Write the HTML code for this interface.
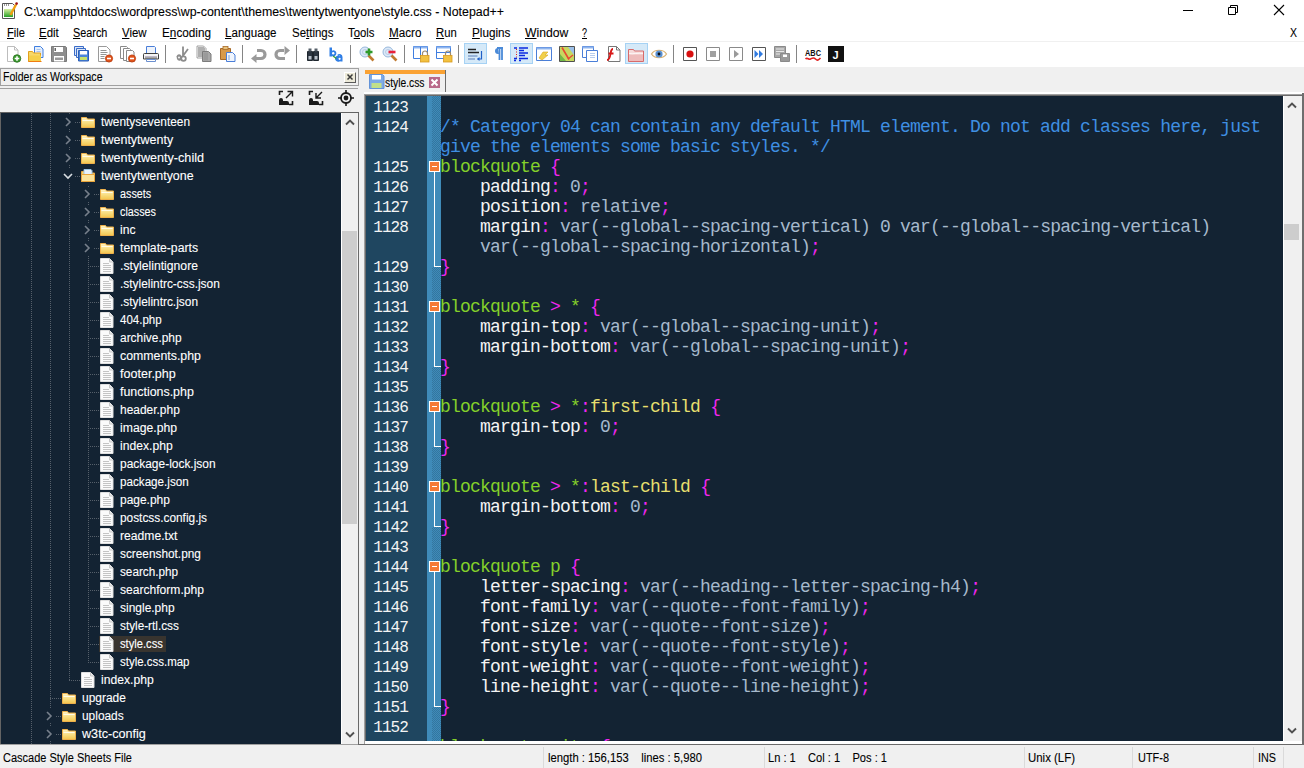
<!DOCTYPE html><html><head><meta charset="utf-8"><style>
*{margin:0;padding:0;box-sizing:border-box}
html,body{width:1304px;height:768px;overflow:hidden;background:#f0f0f0;font-family:"Liberation Sans",sans-serif;font-size:12px;color:#000}
.a{position:absolute}
.tx{position:absolute;white-space:nowrap;line-height:normal;transform-origin:0 0;-webkit-text-stroke:0.1px currentColor}
u{text-decoration:underline;text-underline-offset:1px}
svg{position:absolute;overflow:visible}
#title{left:0;top:0;width:1304px;height:22px;background:#fff}
#menu{left:0;top:22px;width:1304px;height:20px;background:#fff;border-bottom:1px solid #f0f0f0}
#tb{left:0;top:42px;width:1304px;height:26px;background:#fff;border-bottom:1px solid #d5d5d5}
#ed{left:366px;top:96px;width:917px;height:645px;background:#132333;overflow:hidden}
#ln{left:0;top:2px;width:61px;height:646px;color:#f4f4f4;font-family:"Liberation Mono",monospace;font-size:16px;letter-spacing:-0.9px;line-height:20px;text-align:right;padding-right:19px;white-space:pre}
#lnbg{left:0;top:0;width:61px;height:646px;background:#1f4660}
#fm{left:61px;top:0;width:14px;height:646px;background:#3f8bb9}
.chk{background-color:#3f8bb9;background-image:linear-gradient(45deg,#33769f 25%,transparent 25%,transparent 75%,#33769f 75%),linear-gradient(45deg,#33769f 25%,transparent 25%,transparent 75%,#33769f 75%);background-size:2px 2px;background-position:0 0,1px 1px}
#code{left:74px;top:1px;width:900px;color:#fff;font-family:"Liberation Mono",monospace;font-size:18px;letter-spacing:-0.8px;line-height:20px;white-space:pre}
#code div, #ln div{height:20px}
.c{color:#3f8fe2}.s{color:#84d02a}.p{color:#f026f0}.k{color:#f4f4f4}.v{color:#a6b9cc}.y{color:#e6df6e}
#tree{left:1px;top:112px;width:340px;height:632px;background:#132333;overflow:hidden}
.tr{color:#fff}
.sep{position:absolute;top:45px;width:1px;height:18px;background:#858585}
.act{position:absolute;top:43px;height:21px;background:#d5e9f8;border:1px solid #a6d2f4}
</style></head><body>
<div id="title" class="a"></div>
<span id="t0" class="tx" style="left:23.5px;top:4.74px;font-size:12px;color:#000;transform:scaleX(1.0310);">C:\xampp\htdocs\wordpress\wp-content\themes\twentytwentyone\style.css - Notepad++</span>
<svg style="left:0;top:0" width="22" height="22" viewBox="0 0 22 22"><defs><linearGradient id="tig" x1="0" y1="0" x2="0" y2="1"><stop offset="0" stop-color="#d8f0a0"/><stop offset="1" stop-color="#28a028"/></linearGradient></defs><path d="M2.5 3.5h10l2 2v13h-12z" fill="#fff" stroke="#555" stroke-width="1"/><path d="M4 5h1M6 5h1M8 5h1" stroke="#333"/><rect x="4" y="9" width="9" height="8" fill="url(#tig)"/><path d="M16 4.5L10.5 15" stroke="#f0a010" stroke-width="2.4"/><circle cx="16.6" cy="3.6" r="1.3" fill="#a01010"/></svg>
<svg style="left:1183px;top:5px" width="12" height="12"><path d="M0 5.5H10" stroke="#000" stroke-width="1"/></svg>
<svg style="left:1228px;top:5px" width="12" height="12"><path d="M0.5 2.5h7v7h-7z M2.5 2.5v-2h7v7h-2" fill="none" stroke="#000" stroke-width="1"/></svg>
<svg style="left:1274px;top:5px" width="12" height="12"><path d="M0 0L10 10M10 0L0 10" stroke="#000" stroke-width="1.1"/></svg>
<div id="menu" class="a"></div>
<span id="t1" class="tx" style="left:7.4px;top:26.04px;font-size:12px;color:#000;transform:scaleX(0.9298);"><u>F</u>ile</span>
<span id="t2" class="tx" style="left:39.3px;top:26.04px;font-size:12px;color:#000;transform:scaleX(0.9515);"><u>E</u>dit</span>
<span id="t3" class="tx" style="left:73px;top:26.04px;font-size:12px;color:#000;transform:scaleX(0.9041);"><u>S</u>earch</span>
<span id="t4" class="tx" style="left:122px;top:26.04px;font-size:12px;color:#000;transform:scaleX(0.9530);"><u>V</u>iew</span>
<span id="t5" class="tx" style="left:161.5px;top:26.04px;font-size:12px;color:#000;transform:scaleX(0.9785);">E<u>n</u>coding</span>
<span id="t6" class="tx" style="left:225px;top:26.04px;font-size:12px;color:#000;transform:scaleX(0.9643);"><u>L</u>anguage</span>
<span id="t7" class="tx" style="left:291.5px;top:26.04px;font-size:12px;color:#000;transform:scaleX(0.9564);">Se<u>t</u>tings</span>
<span id="t8" class="tx" style="left:347.5px;top:26.04px;font-size:12px;color:#000;transform:scaleX(0.9454);">T<u>o</u>ols</span>
<span id="t9" class="tx" style="left:388.6px;top:26.04px;font-size:12px;color:#000;transform:scaleX(0.9717);"><u>M</u>acro</span>
<span id="t10" class="tx" style="left:436px;top:26.04px;font-size:12px;color:#000;transform:scaleX(0.9396);"><u>R</u>un</span>
<span id="t11" class="tx" style="left:471.6px;top:26.04px;font-size:12px;color:#000;transform:scaleX(0.9752);"><u>P</u>lugins</span>
<span id="t12" class="tx" style="left:524.7px;top:26.04px;font-size:12px;color:#000;transform:scaleX(1.0143);"><u>W</u>indow</span>
<span id="t13" class="tx" style="left:582px;top:26.04px;font-size:12px;color:#000;transform:scaleX(0.7477);"><u>?</u></span>
<span id="t14" class="tx" style="left:1290px;top:26.14px;font-size:12px;color:#000;transform:scaleX(0.8733);">X</span>
<div id="tb" class="a"></div>
<div class="sep" style="left:165px"></div>
<div class="sep" style="left:242px"></div>
<div class="sep" style="left:296px"></div>
<div class="sep" style="left:350px"></div>
<div class="sep" style="left:404px"></div>
<div class="sep" style="left:458px"></div>
<div class="sep" style="left:673px"></div>
<div class="sep" style="left:796px"></div>
<div class="act" style="left:464px;width:23px"></div>
<div class="act" style="left:510px;width:23px"></div>
<div class="act" style="left:625px;width:23px"></div>
<svg style="left:0;top:0" width="1304" height="70" viewBox="0 0 1304 70"><g transform="translate(5,46)"><path d="M2.5 0.5h7l3.5 3.5v11.5h-10.5z" fill="#fff" stroke="#bdbdbd"/><path d="M9.5 0.5v3.5h3.5" fill="none" stroke="#bdbdbd"/>
<circle cx="12" cy="12.5" r="3.8" fill="#3b9a2e" stroke="#2a7020" stroke-width="0.8"/><path d="M12 10.2v4.6M9.7 12.5h4.6" stroke="#fff" stroke-width="1.6"/></g><g transform="translate(28,46)"><path d="M6.5 0.5h6l2.5 2.5v8.5h-8.5z" fill="#e4eefb" stroke="#3f7ee0"/><path d="M8.5 3.5h4M8.5 5.5h4" stroke="#a9c3ea"/>
<path d="M0.5 5.5h4l1 1.5h7v8.5h-12z" fill="#f7d868" stroke="#e2a11d"/><path d="M1 9.5h12v6h-12z" fill="#f5cf4a"/><path d="M0.5 15.5h13" stroke="#f07c10"/></g><g transform="translate(51,46)"><path d="M0.5 0.5h14l1 1v14h-15z" fill="#8e8e8e" stroke="#7a7a7a"/><rect x="3" y="1" width="9" height="5" fill="#fff"/><rect x="3.5" y="2" width="1.5" height="3" fill="#666"/><rect x="3" y="10" width="10" height="5.5" fill="#fff"/><rect x="4" y="11.5" width="8" height="2.5" fill="#999"/></g><g transform="translate(74,46)"><path d="M0.5 0.5h9v9h-9z" fill="#dbe6f7" stroke="#3a6cc8"/><path d="M2.5 2.5h9v9h-9z" fill="#dbe6f7" stroke="#3a6cc8"/>
<path d="M4.5 4.5h10v10.5h-10z" fill="#4d86d9" stroke="#2c5fb8"/><rect x="6" y="5" width="7" height="3.5" fill="#fff"/><rect x="6" y="11" width="7" height="3" fill="#c8e26a"/></g><g transform="translate(97,46)"><path d="M1.5 0.5h8l3.5 3.5v11.5h-11.5z" fill="#fff" stroke="#9a9a9a"/><path d="M3.5 4.5h6M3.5 6.5h7M3.5 8.5h6M3.5 10.5h4M3.5 12.5h4" stroke="#777" stroke-width="0.8"/>
<circle cx="12" cy="12.5" r="3.6" fill="#e1531a" stroke="#b63a0c" stroke-width="0.8"/><path d="M10 12.5h4" stroke="#fff" stroke-width="1.6"/></g><g transform="translate(120,46)"><path d="M0.5 0.5h6l1 1v11h-7z" fill="#fff" stroke="#8a8a8a"/><path d="M3.5 2.5h6l1 1v11h-7z" fill="#fff" stroke="#8a8a8a"/><path d="M6.5 4.5h6l1.5 1.5v9.5h-7.5z" fill="#fff" stroke="#8a8a8a"/>
<circle cx="12" cy="12.5" r="3.6" fill="#e1531a" stroke="#b63a0c" stroke-width="0.8"/><path d="M10 12.5h4" stroke="#fff" stroke-width="1.6"/></g><g transform="translate(143,46)"><path d="M3.5 0.5h8l1 1v6h-9z" fill="#eef3fb" stroke="#4a7ed8"/><path d="M1.5 7.5h13a1 1 0 0 1 1 1v4.5h-15v-4.5a1 1 0 0 1 1-1z" fill="#f4f4f4" stroke="#404040"/><path d="M2 10.5h12" stroke="#c0b8c8"/><path d="M2 12h12" stroke="#5a5a5a"/><path d="M3.5 13.5h9v2h-9z" fill="#fff" stroke="#6b8fcf"/></g><g transform="translate(174,46)"><path d="M9 0.5V10M14 3L8.5 10.5" stroke="#8c8c8c" stroke-width="1.8" fill="none"/><circle cx="9.5" cy="12.6" r="2.3" fill="none" stroke="#8c8c8c" stroke-width="1.8"/><path d="M2.5 10.5a2.6 2.6 0 0 1 5-0.5l0.5 2.5a2.6 2.6 0 0 1-5 0.5z" fill="#8c8c8c"/><circle cx="5" cy="11.5" r="0.9" fill="#fff"/></g><g transform="translate(197,46)"><path d="M0.5 0.5h6l2 2v9h-8z" fill="#b0b0b0" stroke="#fff"/><path d="M0 0h6.5l2.5 2.5v9.5h-9z" fill="none" stroke="#8a8a8a" stroke-width="0.8"/><path d="M5.5 5.5h6l2.5 2.5v7.5h-8.5z" fill="#a8a8a8" stroke="#7c7c7c"/><path d="M6.5 6.5h4.5v8h-4.5z" fill="#9a9a9a"/></g><g transform="translate(220,46)"><path d="M0.5 2.5h10v11h-10z" fill="#d89a4a" stroke="#a86a28"/><rect x="3" y="0.5" width="5" height="3" fill="#e8c27a" stroke="#a86a28" stroke-width="0.8"/>
<path d="M6.5 6.5h6l2.5 2.5v6.5h-8.5z" fill="#f0f5fd" stroke="#4a7ed8"/><path d="M9 9v5" stroke="#b8cdee" stroke-width="2"/></g><g transform="translate(251,46)"><path d="M6 4.5h4a4 4 0 0 1 0 8h-5" fill="none" stroke="#9a9a9a" stroke-width="3.2"/><path d="M0 12.5l5.5-4.5v9z" fill="#9a9a9a"/></g><g transform="translate(274,46)"><path d="M10 4.5h-4a4 4 0 0 0 0 8h5" fill="none" stroke="#9a9a9a" stroke-width="3.2"/><path d="M16 4.5l-5.5-4.5v9z" fill="#9a9a9a"/></g><g transform="translate(305,46)"><path d="M2.5 5.5h5v9h-5z" fill="#2b3540" stroke="#1e262e"/><path d="M8.5 5.5h5v9h-5z" fill="#2b3540" stroke="#1e262e"/><path d="M3.5 2.5h3v3h-3zM9.5 2.5h3v3h-3z" fill="#56606a"/><rect x="3.5" y="10" width="3" height="3.5" fill="#b8c0c8"/><rect x="9.5" y="10" width="3" height="3.5" fill="#b8c0c8"/></g><g transform="translate(328,46)"><path d="M1.5 1.5h2.5v3.2a3 3 0 1 1 0 5.3v0.5h-2.5z" fill="#2f7ee6"/><circle cx="5.2" cy="7.3" r="1.2" fill="#fff"/><path d="M9.5 8.5a3.2 3.2 0 0 1 5 2.5v4.5h-2.3v-0.6a3 3 0 1 1 0-4.4a1.2 1.2 0 0 0-2.2-0.4z" fill="#2f7ee6"/><circle cx="11.6" cy="12.8" r="1.1" fill="#fff"/><path d="M5 10l3.5 2.5" stroke="#3aa040" stroke-width="1.5"/></g><g transform="translate(359,46)"><circle cx="6" cy="6" r="5" fill="#dce9f8" stroke="#98b8dc"/><circle cx="6" cy="6" r="2.5" fill="none" stroke="#b9cde6"/><path d="M9.5 9.5l5 5" stroke="#c07a30" stroke-width="2.6"/><path d="M10 2.5v7M6.5 6h7" stroke="#2f9a2a" stroke-width="2.6"/></g><g transform="translate(382,46)"><circle cx="6" cy="6" r="5" fill="#dce9f8" stroke="#98b8dc"/><circle cx="6" cy="6" r="2.5" fill="none" stroke="#b9cde6"/><path d="M9.5 9.5l5 5" stroke="#c07a30" stroke-width="2.6"/><path d="M6.5 6h7" stroke="#e8203a" stroke-width="2.6"/></g><g transform="translate(413,46)"><path d="M0.5 0.5h14v12h-14z" fill="#fff" stroke="#3f7ee0"/><path d="M0.5 1.5h14" stroke="#8fb5ee" stroke-width="2"/><path d="M7.5 1v12" stroke="#3f7ee0"/>
<path d="M9.5 9.5v-2a2.5 2.5 0 0 1 5 0v2" fill="none" stroke="#9a8a70" stroke-width="1.2"/><rect x="7.5" y="9.5" width="8.5" height="6.5" fill="#f2c140" stroke="#d89a20" stroke-width="0.8"/></g><g transform="translate(436,46)"><path d="M0.5 0.5h14v12h-14z" fill="#fff" stroke="#3f7ee0"/><path d="M0.5 1.5h14" stroke="#8fb5ee" stroke-width="2"/><path d="M1 6.5h13" stroke="#3f7ee0"/>
<path d="M9.5 9.5v-2a2.5 2.5 0 0 1 5 0v2" fill="none" stroke="#9a8a70" stroke-width="1.2"/><rect x="7.5" y="9.5" width="8.5" height="6.5" fill="#f2c140" stroke="#d89a20" stroke-width="0.8"/></g><g transform="translate(467,46)"><path d="M1 3.5h8M1 6.5h11" stroke="#222" stroke-width="1.4"/><path d="M1 10h9.5M1 13h7" stroke="#5a7fb8" stroke-width="1.2"/><path d="M14.5 5v8h-4" fill="none" stroke="#1f5fc8" stroke-width="1.2"/><path d="M10 13l2.5-2v4z" fill="#1f5fc8"/></g><g transform="translate(490,46)"><path d="M7 2h6M9.5 2v12M12 2v12" stroke="#4a8ad8" stroke-width="1.8"/><path d="M8 2a3 3 0 0 0 0 6h1" fill="#4a8ad8"/></g><g transform="translate(513,46)"><path d="M3.5 3v9" stroke="#e02020" stroke-dasharray="1 1.5"/><path d="M1 2h3M1 12.5h3M1 14.5h2" stroke="#0a28e0" stroke-width="1.4"/><path d="M6 2h9M6 4.5h5M6 7h9M6 9.5h6M6 12.5h9M6 14.5h2" stroke="#0a28e0" stroke-width="1.6"/></g><g transform="translate(536,46)"><path d="M0.5 1.5h15v13h-15z" fill="#fff" stroke="#4a7ed8"/><path d="M0.5 2.5h15" stroke="#8fb5ee" stroke-width="2"/><path d="M3 12l4-6h5l-3 3h3l-6 5z" fill="#f2d04a" stroke="#d8a820" stroke-width="0.6"/></g><g transform="translate(559,46)"><path d="M0.5 0.5h15v15h-15z" fill="#c8d860" stroke="#505050"/><path d="M9 1h6v8z" fill="#9cc0e8"/><path d="M1 8l6 7h-6z" fill="#70b848"/><path d="M3 1.5l7 12" stroke="#e84830" stroke-width="1.6"/><path d="M9 13l5-4" stroke="#e84830" stroke-width="1.2"/></g><g transform="translate(582,46)"><path d="M0.5 0.5h11v11h-11z" fill="#fff" stroke="#4a7ed8"/><path d="M0.5 1.5h11" stroke="#8fb5ee" stroke-width="2"/><path d="M4.5 4.5h11v11h-11z" fill="#fff" stroke="#4a7ed8"/><path d="M8 7.5h5M8 9.5h5M8 11.5h5" stroke="#b8cdee"/></g><g transform="translate(605,46)"><path d="M3.5 0.5h8l3.5 3.5v11.5h-11.5z" fill="#fff" stroke="#777"/><path d="M11.5 0.5v3.5h3.5" fill="none" stroke="#777"/><path d="M8 3c-2 0-2 2-2.5 5s-1 6-3.5 6M3.5 7.5h5" fill="none" stroke="#d81818" stroke-width="1.8"/></g><g transform="translate(628,46)"><path d="M0.5 3.5h5l1 1.5h9v10.5h-15z" fill="#f6dada" stroke="#d86a6a"/><path d="M1 8.5h14v6.5h-14z" fill="#eebcbc"/><path d="M1 7.5c4 1 9-1 14 0" stroke="#fff" stroke-width="0.8" fill="none"/></g><g transform="translate(651,46)"><path d="M0.5 8c3-5 12-5 15 0c-3 5-12 5-15 0z" fill="#fff" stroke="#d8b070" stroke-width="1.2"/><circle cx="8" cy="8" r="3.6" fill="#5a90d0"/><circle cx="8" cy="8" r="1.4" fill="#111"/></g><g transform="translate(682,46)"><path d="M1.5 1.5h13v13h-13z" fill="#fff" stroke="#555"/><circle cx="8" cy="8" r="3.6" fill="#d81010"/></g><g transform="translate(705,46)"><path d="M1.5 1.5h13v13h-13z" fill="#fff" stroke="#8a8a8a"/><rect x="5" y="5" width="6" height="6" fill="#a0a0a0"/></g><g transform="translate(728,46)"><path d="M1.5 1.5h13v13h-13z" fill="#fff" stroke="#8a8a8a"/><path d="M6 4l5 4l-5 4z" fill="#9a9a9a"/></g><g transform="translate(751,46)"><path d="M1.5 1.5h13v13h-13z" fill="#fff" stroke="#555"/><path d="M3.5 4l4 4l-4 4zM8 4l4 4l-4 4z" fill="#2f7ae0"/></g><g transform="translate(774,46)"><path d="M0.5 0.5h11v11h-11z" fill="#a8a8a8" stroke="#8a8a8a"/><path d="M2 3h8M2 5.5h8M2 8h8" stroke="#e8e8e8"/><path d="M6.5 7.5h9v8h-9z" fill="#9a9a9a" stroke="#8a8a8a"/><rect x="9" y="8.5" width="4" height="2.5" fill="#fff"/></g><g transform="translate(805,46)"><text x="0" y="10" font-family="Liberation Sans" font-weight="bold" font-size="9" fill="#111" textLength="16" lengthAdjust="spacingAndGlyphs">ABC</text><path d="M0.5 13c2-2 3 1 5 0s3-2 5 0s3 1 5-1" fill="none" stroke="#e02020" stroke-width="1.6"/></g><g transform="translate(828,46)"><rect x="0" y="0" width="16" height="16" fill="#111"/><text x="4.5" y="12.5" font-family="Liberation Sans" font-weight="bold" font-size="11" fill="#fff">J</text></g></svg>
<div class="a" style="left:0;top:67px;width:359px;height:678px;background:#f0f0f0"></div>
<div class="a" style="left:0;top:68px;width:359px;height:18px;border:1px solid #a0a0a0;background:#f0f0f0"></div>
<div class="a" style="left:0;top:88px;width:358px;height:1px;background:#a0a0a0"></div>
<span id="t15" class="tx" style="left:2.5px;top:69.54px;font-size:12px;color:#000;transform:scaleX(0.8793);">Folder as Workspace</span>
<div class="a" style="left:344px;top:72px;width:12px;height:11px;background:#ece9d8;border-right:1px solid #5a5a5a;border-bottom:1px solid #5a5a5a;border-top:1px solid #fff;border-left:1px solid #fff"></div>
<svg style="left:347px;top:74px" width="7" height="7"><path d="M0.5 0.5L5.5 5.5M5.5 0.5L0.5 5.5" stroke="#3a3a3a" stroke-width="1.5"/></svg>
<svg style="left:278px;top:90px" width="16" height="16" viewBox="0 0 16 16"><path d="M5 1.5H1.5V5M14.5 11v3.5H11" fill="none" stroke="#1a1a1a" stroke-width="1.6"/><path d="M8 8L14 2M9.5 1.5h5v5" fill="none" stroke="#1a1a1a" stroke-width="1.4"/><path d="M1 10a2 2 0 0 1 4 0v1h4a2 2 0 0 1 2 2v2h-10z" fill="#1a1a1a"/></svg>
<svg style="left:308px;top:90px" width="16" height="16" viewBox="0 0 16 16"><path d="M5 1.5H1.5V5M14.5 11v3.5H11" fill="none" stroke="#1a1a1a" stroke-width="1.6"/><path d="M14 2L8 8M8 3v5h5" fill="none" stroke="#1a1a1a" stroke-width="1.4"/><path d="M1 10a2 2 0 0 1 4 0v1h4a2 2 0 0 1 2 2v2h-10z" fill="#1a1a1a"/></svg>
<svg style="left:338px;top:90px" width="16" height="16" viewBox="0 0 16 16"><circle cx="8" cy="8" r="5" fill="none" stroke="#1a1a1a" stroke-width="1.8"/><circle cx="8" cy="8" r="2.4" fill="#1a1a1a"/><path d="M8 0v3M8 13v3M0 8h3M13 8h3" stroke="#1a1a1a" stroke-width="1.6"/></svg>
<div id="tree" class="a"></div>
<div class="a" style="left:31px;top:112px;width:1px;height:632px;background:repeating-linear-gradient(#132333 0 1px,#56606b 1px 2px)"></div><div class="a" style="left:50px;top:112px;width:1px;height:632px;background:repeating-linear-gradient(#132333 0 1px,#56606b 1px 2px)"></div><div class="a" style="left:69px;top:112px;width:1px;height:569px;background:repeating-linear-gradient(#132333 0 1px,#56606b 1px 2px)"></div><div class="a" style="left:88px;top:185px;width:1px;height:477px;background:repeating-linear-gradient(#132333 0 1px,#56606b 1px 2px)"></div><div class="a" style="left:69px;top:122px;width:11px;height:1px;background:repeating-linear-gradient(90deg,#56606b 0 1px,#132333 1px 2px)"></div><div class="a" style="left:63px;top:115px;width:11px;height:14px;background:#132333"></div><svg style="left:65px;top:117px" width="7" height="10" viewBox="0 0 7 10"><path d="M1 1L5 5L1 9" fill="none" stroke="#77808c" stroke-width="1.6"/></svg><svg style="left:81px;top:117px" width="14" height="11" viewBox="0 0 14 11"><defs><linearGradient id="fg0" x1="0" y1="0" x2="0" y2="1"><stop offset="0" stop-color="#fff3c4"/><stop offset="0.5" stop-color="#f9df86"/><stop offset="1" stop-color="#f3c64e"/></linearGradient></defs><path d="M0.5 0.5h5l1 1.5h7v8.5h-13z" fill="url(#fg0)" stroke="#eeb04a" stroke-width="1"/><path d="M1.5 3.5h11" stroke="#fffbe8" stroke-width="1"/></svg><span id="t16" class="tx" style="left:101px;top:114.74px;font-size:12px;color:#fff;transform:scaleX(0.9882);">twentyseventeen</span><div class="a" style="left:69px;top:140px;width:11px;height:1px;background:repeating-linear-gradient(90deg,#56606b 0 1px,#132333 1px 2px)"></div><div class="a" style="left:63px;top:133px;width:11px;height:14px;background:#132333"></div><svg style="left:65px;top:135px" width="7" height="10" viewBox="0 0 7 10"><path d="M1 1L5 5L1 9" fill="none" stroke="#77808c" stroke-width="1.6"/></svg><svg style="left:81px;top:135px" width="14" height="11" viewBox="0 0 14 11"><defs><linearGradient id="fg1" x1="0" y1="0" x2="0" y2="1"><stop offset="0" stop-color="#fff3c4"/><stop offset="0.5" stop-color="#f9df86"/><stop offset="1" stop-color="#f3c64e"/></linearGradient></defs><path d="M0.5 0.5h5l1 1.5h7v8.5h-13z" fill="url(#fg1)" stroke="#eeb04a" stroke-width="1"/><path d="M1.5 3.5h11" stroke="#fffbe8" stroke-width="1"/></svg><span id="t17" class="tx" style="left:101px;top:132.74px;font-size:12px;color:#fff;transform:scaleX(1.0407);">twentytwenty</span><div class="a" style="left:69px;top:158px;width:11px;height:1px;background:repeating-linear-gradient(90deg,#56606b 0 1px,#132333 1px 2px)"></div><div class="a" style="left:63px;top:151px;width:11px;height:14px;background:#132333"></div><svg style="left:65px;top:153px" width="7" height="10" viewBox="0 0 7 10"><path d="M1 1L5 5L1 9" fill="none" stroke="#77808c" stroke-width="1.6"/></svg><svg style="left:81px;top:153px" width="14" height="11" viewBox="0 0 14 11"><defs><linearGradient id="fg2" x1="0" y1="0" x2="0" y2="1"><stop offset="0" stop-color="#fff3c4"/><stop offset="0.5" stop-color="#f9df86"/><stop offset="1" stop-color="#f3c64e"/></linearGradient></defs><path d="M0.5 0.5h5l1 1.5h7v8.5h-13z" fill="url(#fg2)" stroke="#eeb04a" stroke-width="1"/><path d="M1.5 3.5h11" stroke="#fffbe8" stroke-width="1"/></svg><span id="t18" class="tx" style="left:101px;top:150.74px;font-size:12px;color:#fff;transform:scaleX(1.0505);">twentytwenty-child</span><div class="a" style="left:69px;top:176px;width:11px;height:1px;background:repeating-linear-gradient(90deg,#56606b 0 1px,#132333 1px 2px)"></div><div class="a" style="left:63px;top:169px;width:12px;height:14px;background:#132333"></div><svg style="left:63px;top:173px" width="10" height="7" viewBox="0 0 10 7"><path d="M1 1L5 5L9 1" fill="none" stroke="#d8dde2" stroke-width="1.6"/></svg><svg style="left:81px;top:169px" width="14" height="13" viewBox="0 0 14 13"><path d="M0.5 2.5h5l1 1.5h7v8.5h-13z" fill="#f6d46a" stroke="#e9a53c" stroke-width="1"/><path d="M3 0.5h7l1 1v4h-8z" fill="#e8f2fb" stroke="#9cc3e6" stroke-width="1"/><path d="M0.5 5.5h13v7h-13z" fill="#fbe39a" stroke="#e9a53c" stroke-width="1"/></svg><span id="t19" class="tx" style="left:101px;top:168.74px;font-size:12px;color:#fff;transform:scaleX(1.0359);">twentytwentyone</span><div class="a" style="left:88px;top:194px;width:11px;height:1px;background:repeating-linear-gradient(90deg,#56606b 0 1px,#132333 1px 2px)"></div><div class="a" style="left:82px;top:187px;width:11px;height:14px;background:#132333"></div><svg style="left:84px;top:189px" width="7" height="10" viewBox="0 0 7 10"><path d="M1 1L5 5L1 9" fill="none" stroke="#77808c" stroke-width="1.6"/></svg><svg style="left:100px;top:189px" width="14" height="11" viewBox="0 0 14 11"><defs><linearGradient id="fg4" x1="0" y1="0" x2="0" y2="1"><stop offset="0" stop-color="#fff3c4"/><stop offset="0.5" stop-color="#f9df86"/><stop offset="1" stop-color="#f3c64e"/></linearGradient></defs><path d="M0.5 0.5h5l1 1.5h7v8.5h-13z" fill="url(#fg4)" stroke="#eeb04a" stroke-width="1"/><path d="M1.5 3.5h11" stroke="#fffbe8" stroke-width="1"/></svg><span id="t20" class="tx" style="left:120px;top:186.74px;font-size:12px;color:#fff;transform:scaleX(0.8995);">assets</span><div class="a" style="left:88px;top:212px;width:11px;height:1px;background:repeating-linear-gradient(90deg,#56606b 0 1px,#132333 1px 2px)"></div><div class="a" style="left:82px;top:205px;width:11px;height:14px;background:#132333"></div><svg style="left:84px;top:207px" width="7" height="10" viewBox="0 0 7 10"><path d="M1 1L5 5L1 9" fill="none" stroke="#77808c" stroke-width="1.6"/></svg><svg style="left:100px;top:207px" width="14" height="11" viewBox="0 0 14 11"><defs><linearGradient id="fg5" x1="0" y1="0" x2="0" y2="1"><stop offset="0" stop-color="#fff3c4"/><stop offset="0.5" stop-color="#f9df86"/><stop offset="1" stop-color="#f3c64e"/></linearGradient></defs><path d="M0.5 0.5h5l1 1.5h7v8.5h-13z" fill="url(#fg5)" stroke="#eeb04a" stroke-width="1"/><path d="M1.5 3.5h11" stroke="#fffbe8" stroke-width="1"/></svg><span id="t21" class="tx" style="left:120px;top:204.74px;font-size:12px;color:#fff;transform:scaleX(0.8971);">classes</span><div class="a" style="left:88px;top:230px;width:11px;height:1px;background:repeating-linear-gradient(90deg,#56606b 0 1px,#132333 1px 2px)"></div><div class="a" style="left:82px;top:223px;width:11px;height:14px;background:#132333"></div><svg style="left:84px;top:225px" width="7" height="10" viewBox="0 0 7 10"><path d="M1 1L5 5L1 9" fill="none" stroke="#77808c" stroke-width="1.6"/></svg><svg style="left:100px;top:225px" width="14" height="11" viewBox="0 0 14 11"><defs><linearGradient id="fg6" x1="0" y1="0" x2="0" y2="1"><stop offset="0" stop-color="#fff3c4"/><stop offset="0.5" stop-color="#f9df86"/><stop offset="1" stop-color="#f3c64e"/></linearGradient></defs><path d="M0.5 0.5h5l1 1.5h7v8.5h-13z" fill="url(#fg6)" stroke="#eeb04a" stroke-width="1"/><path d="M1.5 3.5h11" stroke="#fffbe8" stroke-width="1"/></svg><span id="t22" class="tx" style="left:120px;top:222.74px;font-size:12px;color:#fff;transform:scaleX(1.0102);">inc</span><div class="a" style="left:88px;top:248px;width:11px;height:1px;background:repeating-linear-gradient(90deg,#56606b 0 1px,#132333 1px 2px)"></div><div class="a" style="left:82px;top:241px;width:11px;height:14px;background:#132333"></div><svg style="left:84px;top:243px" width="7" height="10" viewBox="0 0 7 10"><path d="M1 1L5 5L1 9" fill="none" stroke="#77808c" stroke-width="1.6"/></svg><svg style="left:100px;top:243px" width="14" height="11" viewBox="0 0 14 11"><defs><linearGradient id="fg7" x1="0" y1="0" x2="0" y2="1"><stop offset="0" stop-color="#fff3c4"/><stop offset="0.5" stop-color="#f9df86"/><stop offset="1" stop-color="#f3c64e"/></linearGradient></defs><path d="M0.5 0.5h5l1 1.5h7v8.5h-13z" fill="url(#fg7)" stroke="#eeb04a" stroke-width="1"/><path d="M1.5 3.5h11" stroke="#fffbe8" stroke-width="1"/></svg><span id="t23" class="tx" style="left:120px;top:240.74px;font-size:12px;color:#fff;transform:scaleX(1.0169);">template-parts</span><div class="a" style="left:88px;top:266px;width:11px;height:1px;background:repeating-linear-gradient(90deg,#56606b 0 1px,#132333 1px 2px)"></div><svg style="left:100px;top:258px" width="14" height="16" viewBox="0 0 14 16"><path d="M0.5 0.5h9l3.5 3.5v11.5h-12.5z" fill="#fbfbfb" stroke="#e0e0e0" stroke-width="1"/><path d="M9.5 0.5v3.5h3.5" fill="#e8e8e8" stroke="#c8c8c8" stroke-width="1"/><path d="M3 5.5h6M3 7.5h8M3 9.5h8M3 11.5h8M3 13.5h8" stroke="#c4c4c4" stroke-width="1"/></svg><span id="t24" class="tx" style="left:120px;top:258.74px;font-size:12px;color:#fff;transform:scaleX(1.0167);">.stylelintignore</span><div class="a" style="left:88px;top:284px;width:11px;height:1px;background:repeating-linear-gradient(90deg,#56606b 0 1px,#132333 1px 2px)"></div><svg style="left:100px;top:276px" width="14" height="16" viewBox="0 0 14 16"><path d="M0.5 0.5h9l3.5 3.5v11.5h-12.5z" fill="#fbfbfb" stroke="#e0e0e0" stroke-width="1"/><path d="M9.5 0.5v3.5h3.5" fill="#e8e8e8" stroke="#c8c8c8" stroke-width="1"/><path d="M3 5.5h6M3 7.5h8M3 9.5h8M3 11.5h8M3 13.5h8" stroke="#c4c4c4" stroke-width="1"/></svg><span id="t25" class="tx" style="left:120px;top:276.74px;font-size:12px;color:#fff;transform:scaleX(0.9912);">.stylelintrc-css.json</span><div class="a" style="left:88px;top:302px;width:11px;height:1px;background:repeating-linear-gradient(90deg,#56606b 0 1px,#132333 1px 2px)"></div><svg style="left:100px;top:294px" width="14" height="16" viewBox="0 0 14 16"><path d="M0.5 0.5h9l3.5 3.5v11.5h-12.5z" fill="#fbfbfb" stroke="#e0e0e0" stroke-width="1"/><path d="M9.5 0.5v3.5h3.5" fill="#e8e8e8" stroke="#c8c8c8" stroke-width="1"/><path d="M3 5.5h6M3 7.5h8M3 9.5h8M3 11.5h8M3 13.5h8" stroke="#c4c4c4" stroke-width="1"/></svg><span id="t26" class="tx" style="left:120px;top:294.74px;font-size:12px;color:#fff;transform:scaleX(0.9911);">.stylelintrc.json</span><div class="a" style="left:88px;top:320px;width:11px;height:1px;background:repeating-linear-gradient(90deg,#56606b 0 1px,#132333 1px 2px)"></div><svg style="left:100px;top:312px" width="14" height="16" viewBox="0 0 14 16"><path d="M0.5 0.5h9l3.5 3.5v11.5h-12.5z" fill="#fbfbfb" stroke="#e0e0e0" stroke-width="1"/><path d="M9.5 0.5v3.5h3.5" fill="#e8e8e8" stroke="#c8c8c8" stroke-width="1"/><path d="M3 5.5h6M3 7.5h8M3 9.5h8M3 11.5h8M3 13.5h8" stroke="#c4c4c4" stroke-width="1"/></svg><span id="t27" class="tx" style="left:120px;top:312.74px;font-size:12px;color:#fff;transform:scaleX(0.9610);">404.php</span><div class="a" style="left:88px;top:338px;width:11px;height:1px;background:repeating-linear-gradient(90deg,#56606b 0 1px,#132333 1px 2px)"></div><svg style="left:100px;top:330px" width="14" height="16" viewBox="0 0 14 16"><path d="M0.5 0.5h9l3.5 3.5v11.5h-12.5z" fill="#fbfbfb" stroke="#e0e0e0" stroke-width="1"/><path d="M9.5 0.5v3.5h3.5" fill="#e8e8e8" stroke="#c8c8c8" stroke-width="1"/><path d="M3 5.5h6M3 7.5h8M3 9.5h8M3 11.5h8M3 13.5h8" stroke="#c4c4c4" stroke-width="1"/></svg><span id="t28" class="tx" style="left:120px;top:330.74px;font-size:12px;color:#fff;transform:scaleX(0.9928);">archive.php</span><div class="a" style="left:88px;top:356px;width:11px;height:1px;background:repeating-linear-gradient(90deg,#56606b 0 1px,#132333 1px 2px)"></div><svg style="left:100px;top:348px" width="14" height="16" viewBox="0 0 14 16"><path d="M0.5 0.5h9l3.5 3.5v11.5h-12.5z" fill="#fbfbfb" stroke="#e0e0e0" stroke-width="1"/><path d="M9.5 0.5v3.5h3.5" fill="#e8e8e8" stroke="#c8c8c8" stroke-width="1"/><path d="M3 5.5h6M3 7.5h8M3 9.5h8M3 11.5h8M3 13.5h8" stroke="#c4c4c4" stroke-width="1"/></svg><span id="t29" class="tx" style="left:120px;top:348.74px;font-size:12px;color:#fff;transform:scaleX(1.0279);">comments.php</span><div class="a" style="left:88px;top:374px;width:11px;height:1px;background:repeating-linear-gradient(90deg,#56606b 0 1px,#132333 1px 2px)"></div><svg style="left:100px;top:366px" width="14" height="16" viewBox="0 0 14 16"><path d="M0.5 0.5h9l3.5 3.5v11.5h-12.5z" fill="#fbfbfb" stroke="#e0e0e0" stroke-width="1"/><path d="M9.5 0.5v3.5h3.5" fill="#e8e8e8" stroke="#c8c8c8" stroke-width="1"/><path d="M3 5.5h6M3 7.5h8M3 9.5h8M3 11.5h8M3 13.5h8" stroke="#c4c4c4" stroke-width="1"/></svg><span id="t30" class="tx" style="left:120px;top:366.74px;font-size:12px;color:#fff;transform:scaleX(1.0451);">footer.php</span><div class="a" style="left:88px;top:392px;width:11px;height:1px;background:repeating-linear-gradient(90deg,#56606b 0 1px,#132333 1px 2px)"></div><svg style="left:100px;top:384px" width="14" height="16" viewBox="0 0 14 16"><path d="M0.5 0.5h9l3.5 3.5v11.5h-12.5z" fill="#fbfbfb" stroke="#e0e0e0" stroke-width="1"/><path d="M9.5 0.5v3.5h3.5" fill="#e8e8e8" stroke="#c8c8c8" stroke-width="1"/><path d="M3 5.5h6M3 7.5h8M3 9.5h8M3 11.5h8M3 13.5h8" stroke="#c4c4c4" stroke-width="1"/></svg><span id="t31" class="tx" style="left:120px;top:384.74px;font-size:12px;color:#fff;transform:scaleX(1.0337);">functions.php</span><div class="a" style="left:88px;top:410px;width:11px;height:1px;background:repeating-linear-gradient(90deg,#56606b 0 1px,#132333 1px 2px)"></div><svg style="left:100px;top:402px" width="14" height="16" viewBox="0 0 14 16"><path d="M0.5 0.5h9l3.5 3.5v11.5h-12.5z" fill="#fbfbfb" stroke="#e0e0e0" stroke-width="1"/><path d="M9.5 0.5v3.5h3.5" fill="#e8e8e8" stroke="#c8c8c8" stroke-width="1"/><path d="M3 5.5h6M3 7.5h8M3 9.5h8M3 11.5h8M3 13.5h8" stroke="#c4c4c4" stroke-width="1"/></svg><span id="t32" class="tx" style="left:120px;top:402.74px;font-size:12px;color:#fff;transform:scaleX(0.9956);">header.php</span><div class="a" style="left:88px;top:428px;width:11px;height:1px;background:repeating-linear-gradient(90deg,#56606b 0 1px,#132333 1px 2px)"></div><svg style="left:100px;top:420px" width="14" height="16" viewBox="0 0 14 16"><path d="M0.5 0.5h9l3.5 3.5v11.5h-12.5z" fill="#fbfbfb" stroke="#e0e0e0" stroke-width="1"/><path d="M9.5 0.5v3.5h3.5" fill="#e8e8e8" stroke="#c8c8c8" stroke-width="1"/><path d="M3 5.5h6M3 7.5h8M3 9.5h8M3 11.5h8M3 13.5h8" stroke="#c4c4c4" stroke-width="1"/></svg><span id="t33" class="tx" style="left:120px;top:420.74px;font-size:12px;color:#fff;transform:scaleX(1.0170);">image.php</span><div class="a" style="left:88px;top:446px;width:11px;height:1px;background:repeating-linear-gradient(90deg,#56606b 0 1px,#132333 1px 2px)"></div><svg style="left:100px;top:438px" width="14" height="16" viewBox="0 0 14 16"><path d="M0.5 0.5h9l3.5 3.5v11.5h-12.5z" fill="#fbfbfb" stroke="#e0e0e0" stroke-width="1"/><path d="M9.5 0.5v3.5h3.5" fill="#e8e8e8" stroke="#c8c8c8" stroke-width="1"/><path d="M3 5.5h6M3 7.5h8M3 9.5h8M3 11.5h8M3 13.5h8" stroke="#c4c4c4" stroke-width="1"/></svg><span id="t34" class="tx" style="left:120px;top:438.74px;font-size:12px;color:#fff;transform:scaleX(1.0125);">index.php</span><div class="a" style="left:88px;top:464px;width:11px;height:1px;background:repeating-linear-gradient(90deg,#56606b 0 1px,#132333 1px 2px)"></div><svg style="left:100px;top:456px" width="14" height="16" viewBox="0 0 14 16"><path d="M0.5 0.5h9l3.5 3.5v11.5h-12.5z" fill="#fbfbfb" stroke="#e0e0e0" stroke-width="1"/><path d="M9.5 0.5v3.5h3.5" fill="#e8e8e8" stroke="#c8c8c8" stroke-width="1"/><path d="M3 5.5h6M3 7.5h8M3 9.5h8M3 11.5h8M3 13.5h8" stroke="#c4c4c4" stroke-width="1"/></svg><span id="t35" class="tx" style="left:120px;top:456.74px;font-size:12px;color:#fff;transform:scaleX(0.9952);">package-lock.json</span><div class="a" style="left:88px;top:482px;width:11px;height:1px;background:repeating-linear-gradient(90deg,#56606b 0 1px,#132333 1px 2px)"></div><svg style="left:100px;top:474px" width="14" height="16" viewBox="0 0 14 16"><path d="M0.5 0.5h9l3.5 3.5v11.5h-12.5z" fill="#fbfbfb" stroke="#e0e0e0" stroke-width="1"/><path d="M9.5 0.5v3.5h3.5" fill="#e8e8e8" stroke="#c8c8c8" stroke-width="1"/><path d="M3 5.5h6M3 7.5h8M3 9.5h8M3 11.5h8M3 13.5h8" stroke="#c4c4c4" stroke-width="1"/></svg><span id="t36" class="tx" style="left:120px;top:474.74px;font-size:12px;color:#fff;transform:scaleX(0.9715);">package.json</span><div class="a" style="left:88px;top:500px;width:11px;height:1px;background:repeating-linear-gradient(90deg,#56606b 0 1px,#132333 1px 2px)"></div><svg style="left:100px;top:492px" width="14" height="16" viewBox="0 0 14 16"><path d="M0.5 0.5h9l3.5 3.5v11.5h-12.5z" fill="#fbfbfb" stroke="#e0e0e0" stroke-width="1"/><path d="M9.5 0.5v3.5h3.5" fill="#e8e8e8" stroke="#c8c8c8" stroke-width="1"/><path d="M3 5.5h6M3 7.5h8M3 9.5h8M3 11.5h8M3 13.5h8" stroke="#c4c4c4" stroke-width="1"/></svg><span id="t37" class="tx" style="left:120px;top:492.74px;font-size:12px;color:#fff;transform:scaleX(0.9968);">page.php</span><div class="a" style="left:88px;top:518px;width:11px;height:1px;background:repeating-linear-gradient(90deg,#56606b 0 1px,#132333 1px 2px)"></div><svg style="left:100px;top:510px" width="14" height="16" viewBox="0 0 14 16"><path d="M0.5 0.5h9l3.5 3.5v11.5h-12.5z" fill="#fbfbfb" stroke="#e0e0e0" stroke-width="1"/><path d="M9.5 0.5v3.5h3.5" fill="#e8e8e8" stroke="#c8c8c8" stroke-width="1"/><path d="M3 5.5h6M3 7.5h8M3 9.5h8M3 11.5h8M3 13.5h8" stroke="#c4c4c4" stroke-width="1"/></svg><span id="t38" class="tx" style="left:120px;top:510.74px;font-size:12px;color:#fff;transform:scaleX(0.9881);">postcss.config.js</span><div class="a" style="left:88px;top:536px;width:11px;height:1px;background:repeating-linear-gradient(90deg,#56606b 0 1px,#132333 1px 2px)"></div><svg style="left:100px;top:528px" width="14" height="16" viewBox="0 0 14 16"><path d="M0.5 0.5h9l3.5 3.5v11.5h-12.5z" fill="#fbfbfb" stroke="#e0e0e0" stroke-width="1"/><path d="M9.5 0.5v3.5h3.5" fill="#e8e8e8" stroke="#c8c8c8" stroke-width="1"/><path d="M3 5.5h6M3 7.5h8M3 9.5h8M3 11.5h8M3 13.5h8" stroke="#c4c4c4" stroke-width="1"/></svg><span id="t39" class="tx" style="left:120px;top:528.74px;font-size:12px;color:#fff;transform:scaleX(1.0123);">readme.txt</span><div class="a" style="left:88px;top:554px;width:11px;height:1px;background:repeating-linear-gradient(90deg,#56606b 0 1px,#132333 1px 2px)"></div><svg style="left:100px;top:546px" width="14" height="16" viewBox="0 0 14 16"><path d="M0.5 0.5h9l3.5 3.5v11.5h-12.5z" fill="#fbfbfb" stroke="#e0e0e0" stroke-width="1"/><path d="M9.5 0.5v3.5h3.5" fill="#e8e8e8" stroke="#c8c8c8" stroke-width="1"/><path d="M3 5.5h6M3 7.5h8M3 9.5h8M3 11.5h8M3 13.5h8" stroke="#c4c4c4" stroke-width="1"/></svg><span id="t40" class="tx" style="left:120px;top:546.74px;font-size:12px;color:#fff;transform:scaleX(0.9858);">screenshot.png</span><div class="a" style="left:88px;top:572px;width:11px;height:1px;background:repeating-linear-gradient(90deg,#56606b 0 1px,#132333 1px 2px)"></div><svg style="left:100px;top:564px" width="14" height="16" viewBox="0 0 14 16"><path d="M0.5 0.5h9l3.5 3.5v11.5h-12.5z" fill="#fbfbfb" stroke="#e0e0e0" stroke-width="1"/><path d="M9.5 0.5v3.5h3.5" fill="#e8e8e8" stroke="#c8c8c8" stroke-width="1"/><path d="M3 5.5h6M3 7.5h8M3 9.5h8M3 11.5h8M3 13.5h8" stroke="#c4c4c4" stroke-width="1"/></svg><span id="t41" class="tx" style="left:120px;top:564.74px;font-size:12px;color:#fff;transform:scaleX(0.9785);">search.php</span><div class="a" style="left:88px;top:590px;width:11px;height:1px;background:repeating-linear-gradient(90deg,#56606b 0 1px,#132333 1px 2px)"></div><svg style="left:100px;top:582px" width="14" height="16" viewBox="0 0 14 16"><path d="M0.5 0.5h9l3.5 3.5v11.5h-12.5z" fill="#fbfbfb" stroke="#e0e0e0" stroke-width="1"/><path d="M9.5 0.5v3.5h3.5" fill="#e8e8e8" stroke="#c8c8c8" stroke-width="1"/><path d="M3 5.5h6M3 7.5h8M3 9.5h8M3 11.5h8M3 13.5h8" stroke="#c4c4c4" stroke-width="1"/></svg><span id="t42" class="tx" style="left:120px;top:582.74px;font-size:12px;color:#fff;transform:scaleX(1.0063);">searchform.php</span><div class="a" style="left:88px;top:608px;width:11px;height:1px;background:repeating-linear-gradient(90deg,#56606b 0 1px,#132333 1px 2px)"></div><svg style="left:100px;top:600px" width="14" height="16" viewBox="0 0 14 16"><path d="M0.5 0.5h9l3.5 3.5v11.5h-12.5z" fill="#fbfbfb" stroke="#e0e0e0" stroke-width="1"/><path d="M9.5 0.5v3.5h3.5" fill="#e8e8e8" stroke="#c8c8c8" stroke-width="1"/><path d="M3 5.5h6M3 7.5h8M3 9.5h8M3 11.5h8M3 13.5h8" stroke="#c4c4c4" stroke-width="1"/></svg><span id="t43" class="tx" style="left:120px;top:600.74px;font-size:12px;color:#fff;transform:scaleX(0.9978);">single.php</span><div class="a" style="left:88px;top:626px;width:11px;height:1px;background:repeating-linear-gradient(90deg,#56606b 0 1px,#132333 1px 2px)"></div><svg style="left:100px;top:618px" width="14" height="16" viewBox="0 0 14 16"><path d="M0.5 0.5h9l3.5 3.5v11.5h-12.5z" fill="#fbfbfb" stroke="#e0e0e0" stroke-width="1"/><path d="M9.5 0.5v3.5h3.5" fill="#e8e8e8" stroke="#c8c8c8" stroke-width="1"/><path d="M3 5.5h6M3 7.5h8M3 9.5h8M3 11.5h8M3 13.5h8" stroke="#c4c4c4" stroke-width="1"/></svg><span id="t44" class="tx" style="left:120px;top:618.74px;font-size:12px;color:#fff;transform:scaleX(0.9800);">style-rtl.css</span><div class="a" style="left:88px;top:644px;width:11px;height:1px;background:repeating-linear-gradient(90deg,#56606b 0 1px,#132333 1px 2px)"></div><div class="a" style="left:99px;top:636px;width:67px;height:16px;background:#38342f"></div><svg style="left:100px;top:636px" width="14" height="16" viewBox="0 0 14 16"><path d="M0.5 0.5h9l3.5 3.5v11.5h-12.5z" fill="#fbfbfb" stroke="#e0e0e0" stroke-width="1"/><path d="M9.5 0.5v3.5h3.5" fill="#e8e8e8" stroke="#c8c8c8" stroke-width="1"/><path d="M3 5.5h6M3 7.5h8M3 9.5h8M3 11.5h8M3 13.5h8" stroke="#c4c4c4" stroke-width="1"/></svg><span id="t45" class="tx" style="left:120px;top:636.74px;font-size:12px;color:#fff;transform:scaleX(0.9323);">style.css</span><div class="a" style="left:88px;top:662px;width:11px;height:1px;background:repeating-linear-gradient(90deg,#56606b 0 1px,#132333 1px 2px)"></div><svg style="left:100px;top:654px" width="14" height="16" viewBox="0 0 14 16"><path d="M0.5 0.5h9l3.5 3.5v11.5h-12.5z" fill="#fbfbfb" stroke="#e0e0e0" stroke-width="1"/><path d="M9.5 0.5v3.5h3.5" fill="#e8e8e8" stroke="#c8c8c8" stroke-width="1"/><path d="M3 5.5h6M3 7.5h8M3 9.5h8M3 11.5h8M3 13.5h8" stroke="#c4c4c4" stroke-width="1"/></svg><span id="t46" class="tx" style="left:120px;top:654.74px;font-size:12px;color:#fff;transform:scaleX(0.9561);">style.css.map</span><div class="a" style="left:69px;top:680px;width:11px;height:1px;background:repeating-linear-gradient(90deg,#56606b 0 1px,#132333 1px 2px)"></div><svg style="left:81px;top:672px" width="14" height="16" viewBox="0 0 14 16"><path d="M0.5 0.5h9l3.5 3.5v11.5h-12.5z" fill="#fbfbfb" stroke="#e0e0e0" stroke-width="1"/><path d="M9.5 0.5v3.5h3.5" fill="#e8e8e8" stroke="#c8c8c8" stroke-width="1"/><path d="M3 5.5h6M3 7.5h8M3 9.5h8M3 11.5h8M3 13.5h8" stroke="#c4c4c4" stroke-width="1"/></svg><span id="t47" class="tx" style="left:101px;top:672.74px;font-size:12px;color:#fff;transform:scaleX(1.0125);">index.php</span><div class="a" style="left:50px;top:698px;width:11px;height:1px;background:repeating-linear-gradient(90deg,#56606b 0 1px,#132333 1px 2px)"></div><svg style="left:62px;top:693px" width="14" height="11" viewBox="0 0 14 11"><defs><linearGradient id="fg32" x1="0" y1="0" x2="0" y2="1"><stop offset="0" stop-color="#fff3c4"/><stop offset="0.5" stop-color="#f9df86"/><stop offset="1" stop-color="#f3c64e"/></linearGradient></defs><path d="M0.5 0.5h5l1 1.5h7v8.5h-13z" fill="url(#fg32)" stroke="#eeb04a" stroke-width="1"/><path d="M1.5 3.5h11" stroke="#fffbe8" stroke-width="1"/></svg><span id="t48" class="tx" style="left:82px;top:690.74px;font-size:12px;color:#fff;transform:scaleX(0.9967);">upgrade</span><div class="a" style="left:50px;top:716px;width:11px;height:1px;background:repeating-linear-gradient(90deg,#56606b 0 1px,#132333 1px 2px)"></div><div class="a" style="left:44px;top:709px;width:11px;height:14px;background:#132333"></div><svg style="left:46px;top:711px" width="7" height="10" viewBox="0 0 7 10"><path d="M1 1L5 5L1 9" fill="none" stroke="#77808c" stroke-width="1.6"/></svg><svg style="left:62px;top:711px" width="14" height="11" viewBox="0 0 14 11"><defs><linearGradient id="fg33" x1="0" y1="0" x2="0" y2="1"><stop offset="0" stop-color="#fff3c4"/><stop offset="0.5" stop-color="#f9df86"/><stop offset="1" stop-color="#f3c64e"/></linearGradient></defs><path d="M0.5 0.5h5l1 1.5h7v8.5h-13z" fill="url(#fg33)" stroke="#eeb04a" stroke-width="1"/><path d="M1.5 3.5h11" stroke="#fffbe8" stroke-width="1"/></svg><span id="t49" class="tx" style="left:82px;top:708.74px;font-size:12px;color:#fff;transform:scaleX(0.9918);">uploads</span><div class="a" style="left:50px;top:734px;width:11px;height:1px;background:repeating-linear-gradient(90deg,#56606b 0 1px,#132333 1px 2px)"></div><div class="a" style="left:44px;top:727px;width:11px;height:14px;background:#132333"></div><svg style="left:46px;top:729px" width="7" height="10" viewBox="0 0 7 10"><path d="M1 1L5 5L1 9" fill="none" stroke="#77808c" stroke-width="1.6"/></svg><svg style="left:62px;top:729px" width="14" height="11" viewBox="0 0 14 11"><defs><linearGradient id="fg34" x1="0" y1="0" x2="0" y2="1"><stop offset="0" stop-color="#fff3c4"/><stop offset="0.5" stop-color="#f9df86"/><stop offset="1" stop-color="#f3c64e"/></linearGradient></defs><path d="M0.5 0.5h5l1 1.5h7v8.5h-13z" fill="url(#fg34)" stroke="#eeb04a" stroke-width="1"/><path d="M1.5 3.5h11" stroke="#fffbe8" stroke-width="1"/></svg><span id="t50" class="tx" style="left:82px;top:726.74px;font-size:12px;color:#fff;transform:scaleX(1.0527);">w3tc-config</span>
<div class="a" style="left:0;top:112px;width:1px;height:632px;background:#646464"></div>
<div class="a" style="left:0;top:744px;width:359px;height:1px;background:#a0a0a0"></div>
<div class="a" style="left:341px;top:112px;width:17px;height:632px;background:#f0f0f0;border-left:1px solid #fff"></div>
<div class="a" style="left:342px;top:231px;width:15px;height:293px;background:#cdcdcd"></div>
<svg style="left:345px;top:119px" width="10" height="7" viewBox="0 0 10 7"><path d="M1 5.5L5 1.5L9 5.5" fill="none" stroke="#505050" stroke-width="1.9"/></svg>
<svg style="left:345px;top:731px" width="10" height="7" viewBox="0 0 10 7"><path d="M1 1.5L5 5.5L9 1.5" fill="none" stroke="#505050" stroke-width="1.9"/></svg>
<div class="a" style="left:358px;top:112px;width:1px;height:633px;background:#696969"></div>
<div class="a" style="left:0;top:112px;width:359px;height:1px;background:#646464"></div>
<div class="a" style="left:359px;top:67px;width:945px;height:28px;background:#f0f0f0"></div>
<div class="a" style="left:365px;top:70px;width:81px;height:25px;background:#f0f0f0;border-right:1px solid #6d6d6d"></div>
<div class="a" style="left:365px;top:70px;width:80px;height:4px;background:#faa233"></div>
<span id="t51" class="tx" style="left:384.5px;top:76.14px;font-size:12px;color:#000;transform:scaleX(0.8584);">style.css</span>
<svg style="left:369px;top:74px" width="16" height="15" viewBox="0 0 16 15"><path d="M0.5 0.5h13l1.5 1.5v12.5h-14.5z" fill="#7eaae6" stroke="#6393d8"/><rect x="3" y="1" width="9" height="4.5" fill="#fff"/><rect x="2.5" y="9" width="10" height="5" fill="#c2e08a"/></svg>
<div class="a" style="left:429px;top:77px;width:11px;height:11px;background:#b9698a"></div>
<svg style="left:430px;top:78px" width="9" height="9"><path d="M1.5 1.5L7.5 7.5M7.5 1.5L1.5 7.5" stroke="#fff" stroke-width="2"/></svg>
<div class="a" style="left:359px;top:93px;width:945px;height:652px;background:#f0f0f0"></div>
<div class="a" style="left:364px;top:92px;width:940px;height:2px;background:#fff"></div>
<div class="a" style="left:364px;top:94px;width:938px;height:1px;background:#a0a0a0"></div>
<div class="a" style="left:364px;top:94px;width:1px;height:650px;background:#a0a0a0"></div>
<div class="a" style="left:365px;top:95px;width:937px;height:1px;background:#696969"></div>
<div class="a" style="left:365px;top:95px;width:1px;height:647px;background:#696969"></div>
<div class="a" style="left:365px;top:741px;width:937px;height:3px;background:#fff"></div>
<div class="a" style="left:359px;top:744px;width:945px;height:1px;background:#696969"></div>
<div class="a" style="left:1302px;top:93px;width:2px;height:652px;background:#6e6e6e"></div>
<div class="a" style="left:1283px;top:96px;width:19px;height:645px;background:#f0f0f0;border-left:1px solid #fff"></div>
<div class="a" style="left:1284px;top:224px;width:15px;height:16px;background:#cdcdcd"></div>
<svg style="left:1287px;top:102px" width="10" height="7" viewBox="0 0 10 7"><path d="M1 5.5L5 1.5L9 5.5" fill="none" stroke="#505050" stroke-width="1.9"/></svg>
<svg style="left:1287px;top:727px" width="10" height="7" viewBox="0 0 10 7"><path d="M1 1.5L5 5.5L9 1.5" fill="none" stroke="#505050" stroke-width="1.9"/></svg>
<div id="ed" class="a"><div id="lnbg" class="a"></div><div id="ln" class="a"><div>1123</div><div>1124</div><div></div><div>1125</div><div>1126</div><div>1127</div><div>1128</div><div></div><div>1129</div><div>1130</div><div>1131</div><div>1132</div><div>1133</div><div>1134</div><div>1135</div><div>1136</div><div>1137</div><div>1138</div><div>1139</div><div>1140</div><div>1141</div><div>1142</div><div>1143</div><div>1144</div><div>1145</div><div>1146</div><div>1147</div><div>1148</div><div>1149</div><div>1150</div><div>1151</div><div>1152</div><div>1153</div></div><div id="fm" class="a"></div><div class="a chk" style="left:66px;top:0px;width:9px;height:65px"></div><div class="a chk" style="left:66px;top:171px;width:9px;height:34px"></div><div class="a chk" style="left:66px;top:271px;width:9px;height:34px"></div><div class="a chk" style="left:66px;top:351px;width:9px;height:34px"></div><div class="a chk" style="left:66px;top:431px;width:9px;height:34px"></div><div class="a chk" style="left:66px;top:611px;width:9px;height:35px"></div><div class="a" style="left:68px;top:76px;width:1px;height:94px;background:#fff"></div><div class="a" style="left:68px;top:170px;width:7px;height:1px;background:#fff"></div><div class="a" style="left:63px;top:65px;width:11px;height:11px;background:#f47a35;border:1px solid #fff"></div><div class="a" style="left:66px;top:70px;width:5px;height:1px;background:#fff"></div><div class="a" style="left:68px;top:216px;width:1px;height:54px;background:#fff"></div><div class="a" style="left:68px;top:270px;width:7px;height:1px;background:#fff"></div><div class="a" style="left:63px;top:205px;width:11px;height:11px;background:#f47a35;border:1px solid #fff"></div><div class="a" style="left:66px;top:210px;width:5px;height:1px;background:#fff"></div><div class="a" style="left:68px;top:316px;width:1px;height:34px;background:#fff"></div><div class="a" style="left:68px;top:350px;width:7px;height:1px;background:#fff"></div><div class="a" style="left:63px;top:305px;width:11px;height:11px;background:#f47a35;border:1px solid #fff"></div><div class="a" style="left:66px;top:310px;width:5px;height:1px;background:#fff"></div><div class="a" style="left:68px;top:396px;width:1px;height:34px;background:#fff"></div><div class="a" style="left:68px;top:430px;width:7px;height:1px;background:#fff"></div><div class="a" style="left:63px;top:385px;width:11px;height:11px;background:#f47a35;border:1px solid #fff"></div><div class="a" style="left:66px;top:390px;width:5px;height:1px;background:#fff"></div><div class="a" style="left:68px;top:476px;width:1px;height:134px;background:#fff"></div><div class="a" style="left:68px;top:610px;width:7px;height:1px;background:#fff"></div><div class="a" style="left:63px;top:465px;width:11px;height:11px;background:#f47a35;border:1px solid #fff"></div><div class="a" style="left:66px;top:470px;width:5px;height:1px;background:#fff"></div><div id="code" class="a"><div></div><div><span class="c">/* Category 04 can contain any default HTML element. Do not add classes here, just</span></div><div><span class="c">give the elements some basic styles. */</span></div><div><span class="s">blockquote</span> <span class="p">{</span></div><div>    <span class="k">padding</span><span class="p">:</span><span class="v"> 0</span><span class="p">;</span></div><div>    <span class="k">position</span><span class="p">:</span><span class="v"> relative</span><span class="p">;</span></div><div>    <span class="k">margin</span><span class="p">:</span><span class="v"> var(--global--spacing-vertical) 0 var(--global--spacing-vertical)</span></div><div><span class="v">    var(--global--spacing-horizontal)</span><span class="p">;</span></div><div><span class="p">}</span></div><div></div><div><span class="s">blockquote </span><span class="p">&gt;</span><span class="s"> * </span><span class="p">{</span></div><div>    <span class="k">margin-top</span><span class="p">:</span><span class="v"> var(--global--spacing-unit)</span><span class="p">;</span></div><div>    <span class="k">margin-bottom</span><span class="p">:</span><span class="v"> var(--global--spacing-unit)</span><span class="p">;</span></div><div><span class="p">}</span></div><div></div><div><span class="s">blockquote </span><span class="p">&gt;</span><span class="s"> *</span><span class="p">:</span><span class="y">first-child</span> <span class="p">{</span></div><div>    <span class="k">margin-top</span><span class="p">:</span><span class="v"> 0</span><span class="p">;</span></div><div><span class="p">}</span></div><div></div><div><span class="s">blockquote </span><span class="p">&gt;</span><span class="s"> *</span><span class="p">:</span><span class="y">last-child</span> <span class="p">{</span></div><div>    <span class="k">margin-bottom</span><span class="p">:</span><span class="v"> 0</span><span class="p">;</span></div><div><span class="p">}</span></div><div></div><div><span class="s">blockquote p </span><span class="p">{</span></div><div>    <span class="k">letter-spacing</span><span class="p">:</span><span class="v"> var(--heading--letter-spacing-h4)</span><span class="p">;</span></div><div>    <span class="k">font-family</span><span class="p">:</span><span class="v"> var(--quote--font-family)</span><span class="p">;</span></div><div>    <span class="k">font-size</span><span class="p">:</span><span class="v"> var(--quote--font-size)</span><span class="p">;</span></div><div>    <span class="k">font-style</span><span class="p">:</span><span class="v"> var(--quote--font-style)</span><span class="p">;</span></div><div>    <span class="k">font-weight</span><span class="p">:</span><span class="v"> var(--quote--font-weight)</span><span class="p">;</span></div><div>    <span class="k">line-height</span><span class="p">:</span><span class="v"> var(--quote--line-height)</span><span class="p">;</span></div><div><span class="p">}</span></div><div></div><div><span class="s">blockquote cite </span><span class="p">{</span></div></div></div>
<div class="a" style="left:0;top:745px;width:1304px;height:23px;background:#f0f0f0"></div>
<div class="a" style="left:543px;top:747px;width:1px;height:21px;background:#dadada"></div>
<div class="a" style="left:764px;top:747px;width:1px;height:21px;background:#dadada"></div>
<div class="a" style="left:1024px;top:747px;width:1px;height:21px;background:#dadada"></div>
<div class="a" style="left:1132px;top:747px;width:1px;height:21px;background:#dadada"></div>
<div class="a" style="left:1253px;top:747px;width:1px;height:21px;background:#dadada"></div>
<div class="a" style="left:1283px;top:747px;width:1px;height:21px;background:#dadada"></div>
<span id="t52" class="tx" style="left:3px;top:750.64px;font-size:12px;color:#000;transform:scaleX(0.9165);">Cascade Style Sheets File</span>
<span id="t53" class="tx" style="left:548px;top:750.64px;font-size:12px;color:#000;transform:scaleX(0.9383);white-space:pre;">length : 156,153    lines : 5,980</span>
<span id="t54" class="tx" style="left:768px;top:750.64px;font-size:12px;color:#000;transform:scaleX(0.9244);white-space:pre;">Ln : 1    Col : 1    Pos : 1</span>
<span id="t55" class="tx" style="left:1028px;top:750.64px;font-size:12px;color:#000;transform:scaleX(0.9525);">Unix (LF)</span>
<span id="t56" class="tx" style="left:1138px;top:750.64px;font-size:12px;color:#000;transform:scaleX(0.9118);">UTF-8</span>
<span id="t57" class="tx" style="left:1258px;top:750.64px;font-size:12px;color:#000;transform:scaleX(0.8993);">INS</span>
</body></html>
